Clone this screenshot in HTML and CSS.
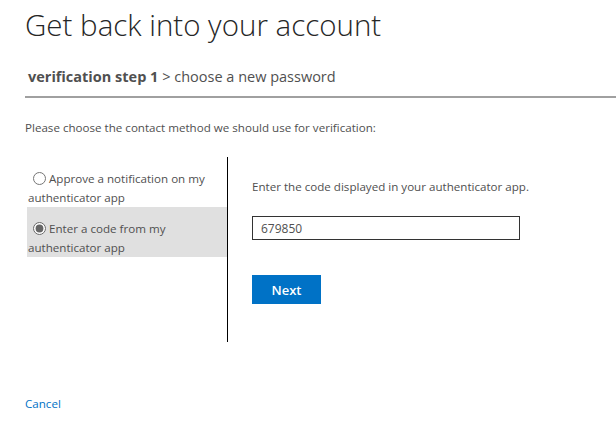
FILE: index.html
```html
<!DOCTYPE html>
<html lang="en">
  <head>
    <meta charset="UTF-8">
    <title>Get back into your account</title>
    <link rel="stylesheet" href="styles.css">
  </head>
  <body>
    <div class="contenedor">
        <h1 class="titulo">Get back into your account</h1>
        <div class="pasos">
            <span class="paso-actual">verification step 1</span> &gt; choose a new password
        </div>
        <p class="instruccion">Please choose the contact method we should use for verification:</p>

        <div class="metodos">
            <div class="opciones">
                <label class="opcion">
                    <input type="radio" name="metodo" class="radio"> Approve a notification on my authenticator app
                </label>
                <label class="opcion opcion-activa">
                    <input type="radio" name="metodo" class="radio" checked> Enter a code from my authenticator app
                </label>
            </div>
            <div class="detalle">
                <p class="ayuda">Enter the code displayed in your authenticator app.</p>
                <input type="text" class="codigo" value="679850">
                <div>
                    <button type="button" class="boton">Next</button>
                </div>
            </div>
        </div>

        <a href="#" class="cancelar">Cancel</a>
    </div>
  </body>
</html>
```

FILE: styles.css
```css
html, body {
    padding: 0;
    margin: 0;
    border: 0;
    width: 100%;
}

body {
    font-family: "Open Sans", "Noto Sans", Arial, sans-serif;
    font-size: 11.6px;
    color: #505050;
    background: #fff;
}

.contenedor {
    padding-left: 25px;
}

.titulo {
    margin: 0;
    padding-top: 4px;
    font-size: 29.5px;
    font-weight: 300;
    line-height: 42px;
    color: #262626;
}

.pasos {
    margin-top: 21px;
    padding: 0 0 9px 3px;
    font-size: 14.5px;
    line-height: 20px;
    color: #505050;
    border-bottom: 2px solid #a0a0a0;
}

.paso-actual {
    font-weight: bold;
}

.instruccion {
    margin: 21px 0 0 0;
    line-height: 18px;
}

.metodos {
    display: flex;
    margin-top: 20px;
}

.opciones {
    width: 200px;
    margin-left: 2px;
    padding-bottom: 85px;
    border-right: 1px solid #000;
}

.opcion {
    display: block;
    height: 50px;
    box-sizing: border-box;
    padding: 12px 4px 0 1px;
    line-height: 19px;
}

.opcion-activa {
    background-color: #e0e0e0;
}

.radio {
    width: 13px;
    height: 13px;
    margin: 0 0 0 5px;
    vertical-align: -2px;
    accent-color: #666;
}

.detalle {
    padding: 20px 0 0 24px;
}

.ayuda {
    margin: 0;
    line-height: 19px;
}

.codigo {
    display: block;
    box-sizing: border-box;
    width: 268px;
    height: 24px;
    margin-top: 20px;
    padding: 0 8px;
    border: 1px solid #333;
    font-family: inherit;
    font-size: 12px;
    color: #505050;
    outline: none;
}

.boton {
    margin-top: 35px;
    width: 69px;
    height: 29px;
    border: none;
    background-color: #0072c6;
    color: #fff;
    font-family: inherit;
    font-size: 13px;
    font-weight: 600;
}

.cancelar {
    display: inline-block;
    margin-top: 53px;
    color: #0072c6;
    text-decoration: none;
    line-height: 18px;
}
```
